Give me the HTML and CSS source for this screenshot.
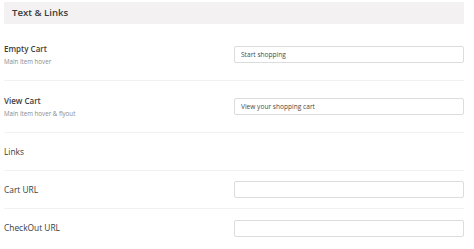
FILE: index.html
```html
<!DOCTYPE html>
<html lang="en">
<head>
    <meta charset="UTF-8">
    <meta name="viewport" content="width=device-width, initial-scale=1.0">
    <title>Text &amp; Links</title>
    <link rel="stylesheet" href="styles.css">
</head>
<body>
    <!-- Section : textes et liens -->
    <div class="panel">
        <div class="panel-header">Text &amp; Links</div>

        <div class="row row-tall row-first">
            <div class="label">
                <div class="label-title">Empty Cart</div>
                <div class="label-sub">Main item hover</div>
            </div>
            <div class="field">
                <input class="text-input" type="text" value="Start shopping">
            </div>
        </div>

        <div class="row row-tall">
            <div class="label">
                <div class="label-title">View Cart</div>
                <div class="label-sub">Main item hover &amp; flyout</div>
            </div>
            <div class="field">
                <input class="text-input" type="text" value="View your shopping cart">
            </div>
        </div>

        <div class="row">
            <div class="label">
                <div class="label-title label-light">Links</div>
            </div>
        </div>

        <div class="row">
            <div class="label">
                <div class="label-title label-light">Cart URL</div>
            </div>
            <div class="field">
                <input class="text-input" type="text" value="">
            </div>
        </div>

        <div class="row row-last">
            <div class="label">
                <div class="label-title label-light">CheckOut URL</div>
            </div>
            <div class="field">
                <input class="text-input" type="text" value="">
            </div>
        </div>
    </div>
</body>
</html>
```

FILE: styles.css
```css
/* Base */
*, *::before, *::after {
    box-sizing: border-box;
    margin: 0;
    padding: 0;
}

body {
    font-family: "Open Sans", "Noto Sans", sans-serif;
    background: #fff;
    color: #3a3a3a;
    padding: 2px 10px 0 4px;
}

/* En-tête de section */
.panel-header {
    height: 22px;
    background: #f3f1f2;
    padding-left: 8px;
    font-size: 9.6px;
    font-weight: 600;
    line-height: 22px;
    color: #3c3c3c;
}

/* Lignes de réglages */
.row {
    display: flex;
    align-items: center;
    padding: 10px 0;
    border-bottom: 1px solid #f1f1f1;
    min-height: 38px;
}

.row-tall {
    padding: 13px 0;
}

.row-first {
    margin-top: 5px;
}

.row-last {
    border-bottom: none;
}

.label {
    width: 230px;
    flex-shrink: 0;
}

.label-title {
    font-size: 8px;
    font-weight: 600;
    line-height: 14px;
    color: #3d3d3d;
}

.label-light {
    font-size: 8.4px;
    font-weight: 500;
    color: #3a3a3a;
}

.label-sub {
    font-size: 6.2px;
    line-height: 11px;
    color: #8a8a8a;
}

.field {
    flex: 1;
}

.text-input {
    display: block;
    width: 100%;
    height: 17px;
    border: 1px solid #dcdcdc;
    border-radius: 2px;
    padding: 0 6px;
    font-family: inherit;
    font-size: 6.6px;
    color: #4a4a4a;
    background: #fff;
    outline: none;
}
```
